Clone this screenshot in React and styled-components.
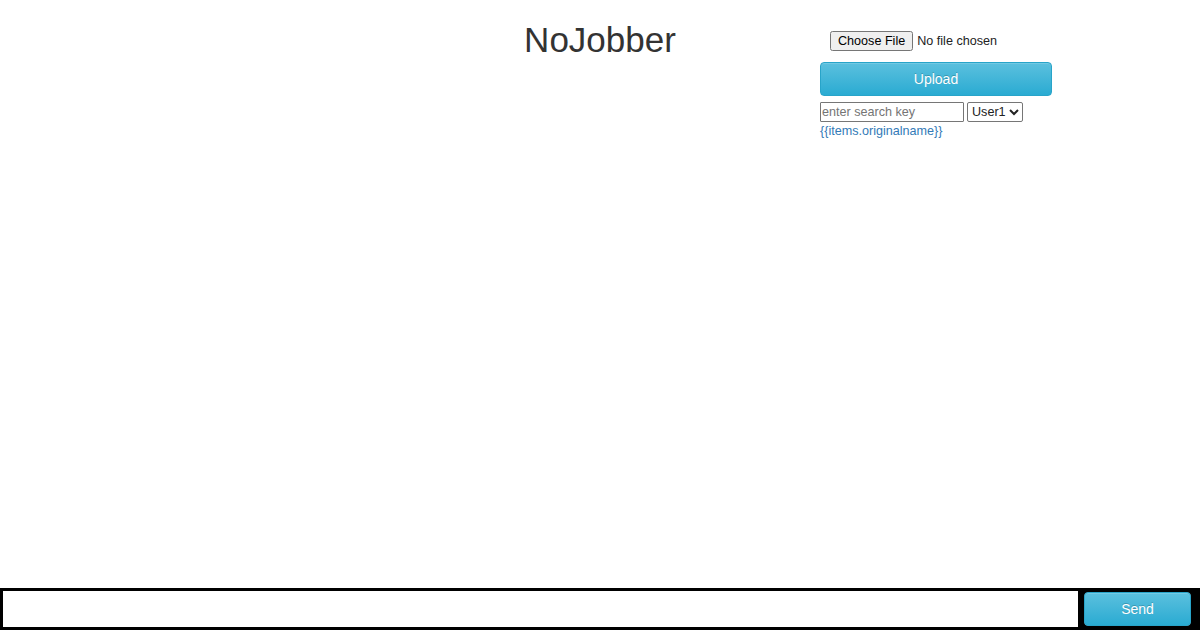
import React from "react";
import styled, { createGlobalStyle } from "styled-components";

const Global = createGlobalStyle`
  html, body { margin: 0; padding: 0; background: #fff; }
  body {
    font-family: "Liberation Sans", Arial, Helvetica, sans-serif;
    font-size: 14px;
    line-height: 1.42857;
    color: #333;
  }
  * { box-sizing: border-box; }
`;

const Page = styled.div`
  height: 100vh;
  display: flex;
  flex-direction: column;
`;

const Main = styled.main`
  flex: 1;
  display: grid;
  grid-template-columns: 420px 360px 1fr;
  align-items: start;
`;

const Title = styled.h1`
  grid-column: 2;
  margin: 21px 0 0;
  text-align: center;
  font-size: 35px;
  font-weight: 500;
  line-height: 1.1;
  color: #333;
`;

const Panel = styled.div`
  grid-column: 3;
  padding: 31px 0 0 40px;
  width: 272px;
  box-sizing: content-box;
  display: flex;
  flex-direction: column;
`;

const FileInput = styled.input`
  margin-left: 10px;
  font-family: "Liberation Sans", Arial, sans-serif;
  font-size: 12.6px;
  color: #222;
  height: 22px;
`;

const InfoButton = styled.button`
  font-family: "Liberation Sans", Arial, sans-serif;
  font-size: 14px;
  color: #fff;
  border: 1px solid #28a4c9;
  border-radius: 4px;
  background-image: linear-gradient(to bottom, #5bc0de 0, #2aabd2 100%);
  text-shadow: 0 -1px 0 rgba(0, 0, 0, 0.2);
  box-shadow: inset 0 1px 0 rgba(255, 255, 255, 0.15);
  cursor: pointer;
`;

const UploadButton = styled(InfoButton)`
  margin-top: 9px;
  width: 232px;
  height: 34px;
`;

const SearchRow = styled.div`
  display: flex;
  align-items: center;
  gap: 3px;
  margin-top: 6px;
`;

const SearchInput = styled.input`
  width: 144px;
  height: 20px;
  padding: 0 1px;
  border: 1px solid #767676;
  border-radius: 1px;
  font-family: "Liberation Sans", Arial, sans-serif;
  font-size: 12.6px;
  color: #333;
  &::placeholder { color: #757575; }
`;

const UserSelect = styled.select`
  height: 20px;
  font-family: "Liberation Sans", Arial, sans-serif;
  font-size: 12.6px;
  color: #222;
  border: 1px solid #767676;
  border-radius: 2px;
  background: #fff;
  padding: 0;
`;

const ItemLink = styled.a`
  color: #337ab7;
  text-decoration: none;
  font-size: 12.6px;
  line-height: 16px;
  margin-top: 1px;
`;

const Footer = styled.footer`
  height: 42px;
  background: #000;
  display: flex;
  align-items: center;
  padding: 3px 9px 3px 3px;
  gap: 6px;
`;

const MessageInput = styled.input`
  flex: 1;
  height: 36px;
  border: none;
  outline: none;
  background: #fff;
  font-family: "Liberation Sans", Arial, sans-serif;
  font-size: 14px;
`;

const SendButton = styled(InfoButton)`
  width: 107px;
  height: 34px;
`;

export default function App() {
  return (
    <>
      <Global />
      <Page>
        <Main>
          <Title>NoJobber</Title>
          <Panel>
            <FileInput type="file" />
            <UploadButton>Upload</UploadButton>
            <SearchRow>
              <SearchInput placeholder="enter search key" />
              <UserSelect defaultValue="User1">
                <option>User1</option>
                <option>User2</option>
              </UserSelect>
            </SearchRow>
            <ItemLink href="#">{"{{items.originalname}}"}</ItemLink>
          </Panel>
        </Main>
        <Footer>
          <MessageInput />
          <SendButton>Send</SendButton>
        </Footer>
      </Page>
    </>
  );
}
